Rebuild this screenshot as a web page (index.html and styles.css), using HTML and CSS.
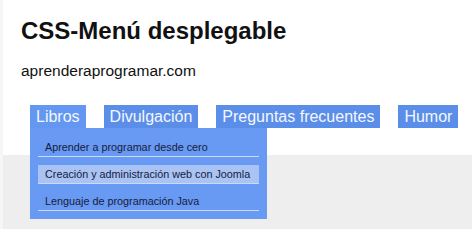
FILE: index.html
```html
<!DOCTYPE html>
<html lang="es">
<head>
<meta charset="utf-8">
<title>CSS-Menú desplegable</title>
<link rel="stylesheet" href="styles.css">
</head>
<body>
<div class="page">
  <header class="top">
    <h1 class="title">CSS-Menú desplegable</h1>
    <p class="site">aprenderaprogramar.com</p>
    <nav>
      <ul class="menu">
        <li class="tab open"><a href="#">Libros</a>
          <ul class="drop">
            <li><a href="#">Aprender a programar desde cero</a></li>
            <li class="hover"><a href="#">Creación y administración web con Joomla</a></li>
            <li><a href="#">Lenguaje de programación Java</a></li>
          </ul>
        </li>
        <li class="tab"><a href="#">Divulgación</a></li>
        <li class="tab"><a href="#">Preguntas frecuentes</a></li>
        <li class="tab"><a href="#">Humor</a></li>
      </ul>
    </nav>
  </header>
  <main class="rest"></main>
</div>
</body>
</html>
```
FILE: styles.css
```css
html, body {
  margin: 0;
  padding: 0;
  background: #ffffff;
  height: 100%;
}
body {
  font-family: "Liberation Sans", Arial, sans-serif;
}
.page {
  display: flex;
  flex-direction: column;
  min-height: 229px;
  border-left: 3px solid #f6f6f6;
}
.top {
  height: 155px;
  box-sizing: border-box;
  padding: 17px 0 0 18px;
  background: #ffffff;
}
.title {
  margin: 0;
  font-size: 24px;
  line-height: 28px;
  font-weight: bold;
  color: #111111;
}
.site {
  margin: 17px 0 0 0;
  font-size: 15.5px;
  line-height: 18px;
  color: #111111;
}
.menu {
  list-style: none;
  margin: 25px 0 0 9px;
  padding: 0;
  display: flex;
  gap: 18px;
}
.tab {
  position: relative;
}
.tab > a {
  display: block;
  padding: 0 6px;
  height: 23px;
  line-height: 23px;
  font-size: 16px;
  color: #f4f7ff;
  text-decoration: none;
  background: #5b8ee9;
}
.open > a {
  background: #6397f1;
}
.drop {
  position: absolute;
  top: 23px;
  left: 0;
  width: 237px;
  box-sizing: border-box;
  list-style: none;
  margin: 0;
  padding: 10px 8px 8px 8px;
  background: #6899f3;
  z-index: 2;
}
.drop li {
  margin-bottom: 8px;
  border-bottom: 1px solid #cad9f7;
}
.drop li:last-child {
  margin-bottom: 0;
}
.drop a {
  display: block;
  height: 18px;
  line-height: 18px;
  padding-left: 7px;
  font-size: 10.8px;
  color: #17203a;
  text-decoration: none;
  white-space: nowrap;
}
.drop .hover a {
  background: #a9c3f5;
}
.rest {
  flex: 1;
  background: #eeeeee;
  margin-right: 2px;
  min-height: 74px;
}
```
